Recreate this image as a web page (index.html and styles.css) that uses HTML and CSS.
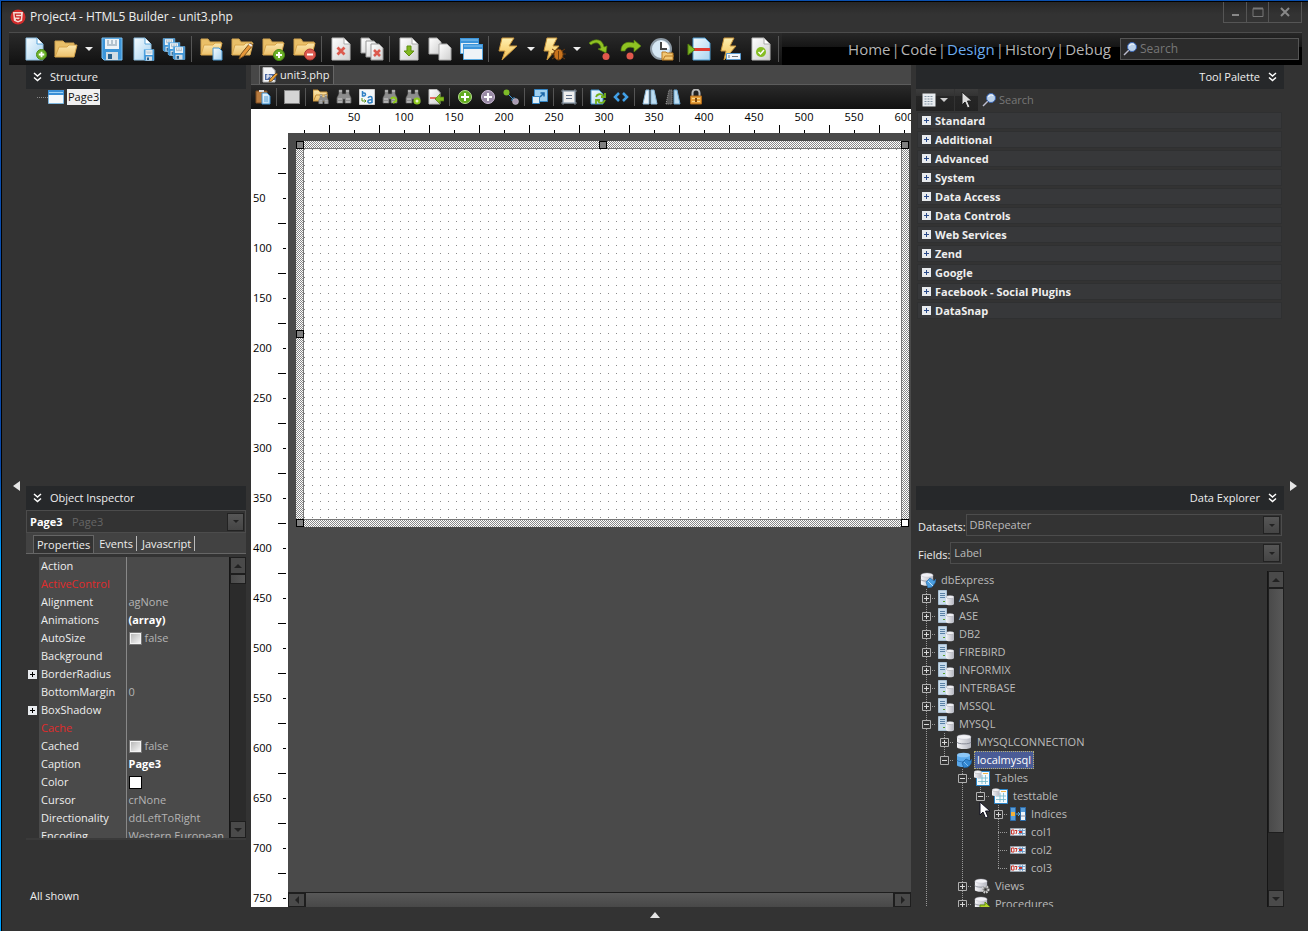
FILE: index.html
```html
<!DOCTYPE html>
<html lang="en">
<head>
    <meta charset="UTF-8">
    <meta name="viewport" content="width=device-width, initial-scale=1.0">
    <title>Project4 - HTML5 Builder - unit3.php</title>
    <link rel="stylesheet" href="styles.css">
</head>
<body>
    <!-- icon sprite -->
    <svg class="sprite" aria-hidden="true">
        <defs>
            <linearGradient id="g-folder" x1="0" y1="0" x2="0" y2="1"><stop offset="0" stop-color="#fbe7ae"/><stop offset="1" stop-color="#ecc06a"/></linearGradient>
            <linearGradient id="g-blue" x1="0" y1="0" x2="1" y2="1"><stop offset="0" stop-color="#f4fbff"/><stop offset="1" stop-color="#a9d3f0"/></linearGradient>
            <linearGradient id="g-grey" x1="0" y1="0" x2="1" y2="1"><stop offset="0" stop-color="#ffffff"/><stop offset="1" stop-color="#cfcfcf"/></linearGradient>
            <linearGradient id="g-bolt" x1="0" y1="0" x2="0" y2="1"><stop offset="0" stop-color="#fff0b0"/><stop offset="1" stop-color="#f3bf50"/></linearGradient>
            <linearGradient id="g-db" x1="0" y1="0" x2="1" y2="0"><stop offset="0" stop-color="#f5f5f8"/><stop offset="1" stop-color="#b4b6c0"/></linearGradient>
        </defs>
        <symbol id="page-blue" viewBox="0 0 24 24"><path d="M3 1h11l6 6v16H3z" fill="url(#g-blue)" stroke="#8fbfe0"/><path d="M14 1v6h6" fill="#fff" stroke="#5ba5d8"/></symbol>
        <symbol id="page-grey" viewBox="0 0 24 24"><path d="M3 1h12l6 6v16H3z" fill="url(#g-grey)" stroke="#bbb"/><path d="M15 1v6h6z" fill="#fff" stroke="#aaa"/></symbol>
        <symbol id="folder" viewBox="0 0 24 24"><path d="M2 18V2h7l2 3h11v4" fill="#e9bf68" stroke="#d0a350"/><path d="M2 18l3-10h9l2-2h7l-3 12z" fill="url(#g-folder)" stroke="#d8a64c"/></symbol>
        <symbol id="plus-badge" viewBox="0 0 12 12"><circle cx="6" cy="6" r="5.500" fill="#6cb02a" stroke="#4b8a12"/><path d="M6 3v6M3 6h6" stroke="#fff" stroke-width="2"/></symbol>
        <symbol id="floppy" viewBox="0 0 24 24"><path d="M2 1h20v22H4l-2-2z" fill="#3d95d8" stroke="#7cc0f0"/><path d="M5 2h14v10H5z" fill="#eef4f8"/><path d="M7 4h2M11 4h2M15 4h2M7 6h2M11 6h2M15 6h2M7 8h10" stroke="#7b93a6"/><path d="M6 15h12v8H6z" fill="#d4dde4"/><path d="M8 17h4v5H8z" fill="#28618f"/></symbol>

        <symbol id="i-logo" viewBox="0 0 16 16"><circle cx="8" cy="8" r="7.500" fill="#d22c2c"/><path d="M3 3h10l-.9 8.800L8 13.500l-4.100-1.700z" fill="#f6ddd6"/><path d="M11 5.200H5.300l.3 2.600h4.800l-.4 2.600-2 .8-2-.8" fill="none" stroke="#c22" stroke-width="1.300"/></symbol>
        <symbol id="i-new" viewBox="0 0 24 24"><use href="#page-blue" x="0" y="0" width="24" height="24"/><use href="#plus-badge" x="13" y="12" width="11" height="11"/></symbol>
        <symbol id="i-open" viewBox="0 0 24 24"><path d="M1 20V4h8l2 2h9v3" fill="#e9bf68" stroke="#d0a350"/><path d="M1 20l4-10h8l2-2h8l-3 12z" fill="url(#g-folder)" stroke="#d8a64c"/></symbol>
        <symbol id="i-saveas" viewBox="0 0 24 24"><use href="#page-blue" width="24" height="24"/><use href="#floppy" x="12" y="12" width="12" height="12"/></symbol>
        <symbol id="i-saveall" viewBox="0 0 24 24"><use href="#floppy" x="0" y="1" width="14" height="14"/><use href="#floppy" x="5" y="5" width="14" height="14"/><use href="#floppy" x="10" y="9" width="14" height="14"/></symbol>
        <symbol id="i-fpage" viewBox="0 0 24 24"><use href="#folder" width="24" height="24"/><path d="M14 11h6l3 3v9h-9z" fill="url(#g-blue)" stroke="#4a95cc"/></symbol>
        <symbol id="i-fedit" viewBox="0 0 24 24"><use href="#folder" width="24" height="24"/><path d="M9 22l2-5L20 6l3 2-9 11z" fill="#e8983a" stroke="#7a5320"/><path d="M19 7l3 2" stroke="#eee" stroke-width="2"/></symbol>
        <symbol id="i-fadd" viewBox="0 0 24 24"><use href="#folder" width="24" height="24"/><use href="#plus-badge" x="12" y="12" width="12" height="12"/></symbol>
        <symbol id="i-fdel" viewBox="0 0 24 24"><use href="#folder" width="24" height="24"/><circle cx="18" cy="17.500" r="5.500" fill="#dc5a50" stroke="#b03a32"/><path d="M15 17.500h6" stroke="#fff" stroke-width="2"/></symbol>
        <symbol id="i-close" viewBox="0 0 24 24"><use href="#page-grey" width="24" height="24"/><path d="M8.500 10.500l7 7M15.500 10.500l-7 7" stroke="#dc5a4e" stroke-width="2.800"/></symbol>
        <symbol id="i-closeall" viewBox="0 0 24 24"><path d="M1 1h8l3 3v12H1z" fill="url(#g-grey)" stroke="#999"/><path d="M6 4h8l4 4v12H6z" fill="url(#g-grey)" stroke="#999"/><path d="M11 7h8l4 4v12H11z" fill="url(#g-grey)" stroke="#999"/><path d="M14 13l6 6M20 13l-6 6" stroke="#dc5a4e" stroke-width="2.500"/></symbol>
        <symbol id="i-down" viewBox="0 0 24 24"><use href="#page-grey" width="24" height="24"/><path d="M10 9h4v5h3l-5 5-5-5h3z" fill="#82b81f" stroke="#5f8f10"/></symbol>
        <symbol id="i-copy" viewBox="0 0 24 24"><path d="M1 1h8l4 4v12H1z" fill="url(#g-grey)" stroke="#aaa"/><path d="M11 7h8l4 4v12H11z" fill="url(#g-grey)" stroke="#aaa"/></symbol>
        <symbol id="i-windows" viewBox="0 0 24 24"><path d="M1.500 1.500h18v15h-18z" fill="#e4eff6" stroke="#5aa9e0"/><path d="M1 1h19v5H1z" fill="#3b94da"/><path d="M2 3h17" stroke="#8cc8f2"/><path d="M4.500 7.500h19v15h-19z" fill="#eef3f7" stroke="#5aa9e0"/><path d="M4 7h20v5H4z" fill="#3b94da"/><path d="M5 9h18" stroke="#8cc8f2"/></symbol>
        <symbol id="i-bolt" viewBox="0 0 24 24"><path d="M6 1h12l-5 8h8L6 23l3-9H3z" fill="url(#g-bolt)" stroke="#c8953c"/></symbol>
        <symbol id="i-bug" viewBox="0 0 24 24"><path d="M5 1h10l-4 8h6L5 23l2-9H2z" fill="url(#g-bolt)" stroke="#c8953c"/><path d="M10 12l3 2M23 12l-3 2M9 17h4M24 17h-4M10 22l3-2M23 22l-3-2" stroke="#6b3a10"/><ellipse cx="16.500" cy="17.500" rx="4.500" ry="5.500" fill="#c8731d" stroke="#73400f"/><path d="M16.500 14v9" stroke="#73400f"/></symbol>
        <symbol id="i-stepinto" viewBox="0 0 24 24"><path d="M1 6c7-6 14-3 15 4l3-1-1 7-8-4 3-1C12 6 8 4 3 8z" fill="#8fc222" stroke="#55800f" stroke-width=".7"/><circle cx="18" cy="19.500" r="3.500" fill="#e0584c"/></symbol>
        <symbol id="i-stepover" viewBox="0 0 24 24"><path d="M2 14C2 6 8 4 15 6V3l7 6-7 6v-4c-5-2-8 0-9 3z" fill="#8fc222" stroke="#55800f" stroke-width=".7"/><circle cx="11" cy="19" r="3.500" fill="#e0584c"/></symbol>
        <symbol id="i-clock" viewBox="0 0 24 24"><circle cx="11" cy="12" r="10" fill="#d6e8f5" stroke="#8d9aa5" stroke-width="2"/><path d="M11 4a8 8 0 018 8h-8z" fill="#fff"/><path d="M11 5v7h6" fill="none" stroke="#444" stroke-width="2"/><path d="M12 23v-8h4l1 1h6v7z" fill="#f2c774" stroke="#b97a22"/><path d="M13 23l2-4h9" fill="none" stroke="#b97a22"/></symbol>
        <symbol id="i-break" viewBox="0 0 24 24"><path d="M6 1h12l5 5v17H6z" fill="url(#g-blue)" stroke="#4e9bd0"/><path d="M7 12.500h16" stroke="#e03a32" stroke-width="3"/><path d="M1 7l7 5.500L1 18z" fill="#7fbb24" stroke="#55800f"/></symbol>
        <symbol id="i-boltbox" viewBox="0 0 24 24"><path d="M6 1h10l-4 8h6L6 23l2-9H3z" fill="url(#g-bolt)" stroke="#c8953c"/><path d="M8.500 16.500h14v6h-14z" fill="#f3f8fc" stroke="#5b9bd0"/><path d="M11 18v3M14 19.500h6" stroke="#777"/></symbol>
        <symbol id="i-check" viewBox="0 0 24 24"><use href="#page-grey" width="24" height="24"/><circle cx="12" cy="15" r="5" fill="#86bd22"/><path d="M9.500 15l2 2 3.500-4" fill="none" stroke="#fff" stroke-width="1.500"/></symbol>

        <symbol id="s-paste" viewBox="0 0 16 16"><path d="M1 2h11v12H1z" fill="#b97b3e" stroke="#7d4d20"/><path d="M4 1h5v2H4z" fill="#ddd"/><path d="M7 4h5l3 3v8H7z" fill="url(#g-blue)" stroke="#3b8ccb"/><path d="M9 8h4M9 10h4M9 12h4" stroke="#5ba0d4"/></symbol>
        <symbol id="s-select" viewBox="0 0 16 16"><path d="M1 2h14v12H1z" fill="#d4d4d4"/><path d="M.5 1.500h15v13H.5z" fill="none" stroke="#eee" stroke-dasharray="1 1"/></symbol>
        <symbol id="s-binoc" viewBox="0 0 16 16"><path d="M3 1h3v4h4V1h3v4l2 4v5H9v-4H7v4H1V9l2-4z" fill="#8d8d8d" stroke="#777" stroke-width=".6"/><path d="M3 2h3M10 2h3M2 10h4M10 10h4M2 13h4M10 13h4" stroke="#d2d2d2"/></symbol>
        <symbol id="s-ffind" viewBox="0 0 16 16"><path d="M0 12V1h5l2 2h7v9z" fill="url(#g-folder)" stroke="#c5903b"/><path d="M1 11l2-5h12" fill="none" stroke="#c5903b"/><use href="#s-binoc" x="5" y="5" width="11" height="11"/></symbol>
        <symbol id="s-replace" viewBox="0 0 16 16"><path d="M.5.5h15v15H.5z" fill="#f3f7fa" stroke="#ccc"/><path d="M3.500 2v5h1.500a1.500 1.500 0 000-3H3.500M9 9c1-2 4-2 4 0v5M13 11c-5-1-5 3-2.500 3 1.500 0 2.500-1 2.500-1.500" fill="none" stroke="#2d7fc4" stroke-width="1.500"/><path d="M3 9v3h4M5.500 10.500L7 12l-1.500 1.500" fill="none" stroke="#5a9318"/></symbol>
        <symbol id="s-findnext" viewBox="0 0 16 16"><use href="#s-binoc" width="16" height="16"/><path d="M9 10c2-3 6-1 5 2l-3 2" fill="none" stroke="#8cc81c" stroke-width="2"/></symbol>
        <symbol id="s-findadd" viewBox="0 0 16 16"><use href="#s-binoc" width="16" height="16"/><circle cx="12" cy="12" r="3.500" fill="#8cc81c"/><circle cx="12" cy="12" r="1.500" fill="#e9f6c8"/></symbol>
        <symbol id="s-goto" viewBox="0 0 16 16"><path d="M1 .5h8l3 3V15H1z" fill="url(#g-grey)" stroke="#bbb"/><path d="M2 9h6" stroke="#e04438" stroke-width="1.500"/><path d="M16 8v4h-4v3l-5-5 5-5v3z" fill="#84bd1e" stroke="#4d790e" stroke-width=".7"/></symbol>
        <symbol id="s-add" viewBox="0 0 16 16"><circle cx="8" cy="8" r="6.500" fill="#62ac1e" stroke="#b5de90"/><path d="M8 4v8M4 8h8" stroke="#fff" stroke-width="2"/></symbol>
        <symbol id="s-add2" viewBox="0 0 16 16"><circle cx="8" cy="8" r="6.500" fill="#9a8ba6" stroke="#cdbcd8"/><path d="M8 4v8M4 8h8" stroke="#fff" stroke-width="2"/></symbol>
        <symbol id="s-link" viewBox="0 0 16 16"><path d="M5 5l6 6M11 8v3H8" stroke="#3b91d2" fill="none"/><circle cx="3.500" cy="3.500" r="3" fill="#7dbb28"/><circle cx="12.500" cy="12.500" r="3" fill="#a99ab3" stroke="#ccc" stroke-width=".5"/></symbol>
        <symbol id="s-scale" viewBox="0 0 16 16"><path d="M2.500.5h13v12h-13z" fill="#9fd0f0" stroke="#3585c4"/><path d="M.5 7.500h7v7h-7z" fill="#dceef9" stroke="#3585c4"/><path d="M8 8l4-4M8.500 4H12v3.500" stroke="#1c67a8" fill="none" stroke-width="1.500"/></symbol>
        <symbol id="s-frame" viewBox="0 0 16 16"><path d="M2 2h12v12H2z" fill="#eee" stroke="#8898a8"/><path d="M0 2h16M0 14h16M2 0v16M14 0v16" stroke="#9aa6b4" stroke-width=".7"/><path d="M5 6.500h6M5 9.500h6" stroke="#60718a"/></symbol>
        <symbol id="s-refresh" viewBox="0 0 16 16"><path d="M1 1h8l4 4v10H1z" fill="url(#g-blue)" stroke="#4594cc"/><path d="M6 8c1-3 5-4 7-1M15 4v4h-4M15 11c-1 3-5 4-7 1M6 15v-4h4" fill="none" stroke="#74b21a" stroke-width="1.800"/></symbol>
        <symbol id="s-code" viewBox="0 0 16 16"><path d="M6 4L2 8l4 4M10 4l4 4-4 4" fill="none" stroke="#42a0e6" stroke-width="2.500"/></symbol>
        <symbol id="s-mirror" viewBox="0 0 16 16"><path d="M1 15L4 1h3v14z" fill="#e9f4fb" stroke="#8bb8d8"/><path d="M15 15L12 1H9v14z" fill="#bcdcf0" stroke="#8bb8d8"/></symbol>
        <symbol id="s-mirror2" viewBox="0 0 16 16"><path d="M1 15L4 1h3v14z" fill="#555" stroke="#999" stroke-dasharray="1 1"/><path d="M15 15L12 1H9v14z" fill="#bcdcf0" stroke="#6aa6d0"/></symbol>
        <symbol id="s-lock" viewBox="0 0 16 16"><path d="M4.500 7V4a3.500 3.500 0 017 0v3" fill="none" stroke="#b9b9b9" stroke-width="2"/><path d="M2.500 7h11v8h-11z" fill="#e9a13a" stroke="#a9651a"/><path d="M4 9.500h8M4 12.500h8" stroke="#fbd48a"/><path d="M7 9h2v4H7z" fill="#7a4611"/></symbol>
        <symbol id="s-php" viewBox="0 0 16 16"><path d="M1 .5h9l3 3V15H1z" fill="#f2f4f6" stroke="#bbb"/><path d="M3 7h11v6H3z" fill="#4a68a4"/><path d="M5 12V8h2v2H5M9 8v4M9 10h2" stroke="#fff" fill="none"/><path d="M7 15l1-3 6-6 2 1-6 7z" fill="#e9a13a" stroke="#5a3c12" stroke-width=".7"/></symbol>
        <symbol id="s-window" viewBox="0 0 16 14"><path d="M.5.5h15v13H.5z" fill="#f6f9fb" stroke="#7fb8e0"/><path d="M0 0h16v5H0z" fill="#3a8fd6"/><path d="M1 2.500h14" stroke="#9fd2f5"/></symbol>
        <symbol id="s-search" viewBox="0 0 16 16"><path d="M1 14l5-5" stroke="#bbc" stroke-width="1.500"/><circle cx="9" cy="6" r="4.500" fill="#bcd2ea" stroke="#3b66b4"/><path d="M6.500 5a3 3 0 014.500-1.500" stroke="#fff" fill="none"/></symbol>
        <symbol id="s-list" viewBox="0 0 14 14"><path d="M.5.5h13v13H.5z" fill="#e8ecef"/><path d="M2.500 3.500h9M2.500 6h9M2.500 8.500h9M2.500 11h9" stroke="#8596a5" stroke-dasharray="2 1"/></symbol>
        <symbol id="s-pointer" viewBox="0 0 12 18"><path d="M1 1v13l3-3 2.500 6 2.500-1-2.500-6H11z" fill="currentColor" stroke="var(--edge, #222)"/></symbol>

        <symbol id="t-db" viewBox="0 0 16 16"><path d="M1 3v10c0 2.700 14 2.700 14 0V3z" fill="url(#g-db)"/><ellipse cx="8" cy="3" rx="7" ry="2.300" fill="#f2f2f6" stroke="#b9bbc5" stroke-width=".5"/><path d="M1 8c0 2.500 14 2.500 14 0" fill="none" stroke="#878a96"/></symbol>
        <symbol id="t-dblink" viewBox="0 0 16 16"><use href="#t-db" width="14" height="15"/><path d="M6 10l4-4 4 3 2-2-1 4-3 4-4 1z" fill="#4c9fe0" stroke="#2a6faf" stroke-width=".7"/><path d="M8 9l5 5" stroke="#bfe0f8"/></symbol>
        <symbol id="t-dbblue" viewBox="0 0 16 16"><path d="M1 3v10c0 2.700 13 2.700 13 0V3z" fill="#5aa9ec"/><ellipse cx="7.500" cy="3" rx="6.500" ry="2.300" fill="#8cc6f6"/><path d="M1 8c0 2.500 13 2.500 13 0" fill="none" stroke="#2e78bd"/><path d="M6 11l4-4 4 2 2-2-1 5-3 3-4 1z" fill="#3388d2" stroke="#1d5c98" stroke-width=".7"/><path d="M8 10l4 4" stroke="#7fbcf0"/></symbol>
        <symbol id="t-server" viewBox="0 0 16 16"><path d="M.5.5h8v14h-8z" fill="#c9dcec" stroke="#a9c0d3"/><path d="M2 3.500h5M2 5.500h5M2 7.500h5" stroke="#5b83a6"/><path d="M5 11h2v1H5z" fill="#5ba32a"/><path d="M8 7v7c0 1.800 8 1.800 8 0V7z" fill="url(#g-db)"/><ellipse cx="12" cy="7" rx="4" ry="1.500" fill="#f5f5f8" stroke="#9a9ca6" stroke-width=".5"/></symbol>
        <symbol id="t-table" viewBox="0 0 16 16"><path d="M2.500 1.500h13v14h-13z" fill="#f4fafd" stroke="#2b86c9"/><path d="M9 3h5v1H9z" fill="#f3b64c"/><path d="M4 8h10M4 11.500h10M8 5v9M11.500 5v9" stroke="#6fb6c9" stroke-width=".8"/><path d="M0 2v5c0 1.500 7.500 1.500 7.500 0V2z" fill="url(#g-db)"/><ellipse cx="3.800" cy="2" rx="3.700" ry="1.500" fill="#f2f2f6" stroke="#aaa" stroke-width=".5"/></symbol>
        <symbol id="t-index" viewBox="0 0 16 16"><path d="M.5 1.500h5v13h-5z" fill="#5a9dd8" stroke="#2b6cab"/><path d="M1 6h4v4H1z" fill="#f4b23c"/><path d="M10.500 1.500h5v13h-5z" fill="#f0f4f8" stroke="#2b6cab"/><path d="M11 2h4v4h-4z" fill="#5a9dd8"/><path d="M11 10h5" stroke="#889"/><path d="M6 8h4M8 6l2 2-2 2" fill="none" stroke="#52aef0"/></symbol>
        <symbol id="t-col" viewBox="0 0 16 10"><path d="M.5 1.500h15v7H.5z" fill="#eef2f6" stroke="#98a2ac"/><path d="M1.500 3v4H4V3zM5 3.500h2L6 7" fill="none" stroke="#c8352b"/><path d="M8 3.500h7M8 6.500h7M10 2v6M12.500 2v6" stroke="#5b93c8" stroke-width=".8"/><path d="M9 4h3v2H9z" fill="#c8352b"/></symbol>
        <symbol id="t-views" viewBox="0 0 16 16"><use href="#t-db" width="14" height="15"/><circle cx="11.500" cy="11.500" r="3" fill="#777" stroke="#d0d0d0" stroke-width="2" stroke-dasharray="1.500 1"/><circle cx="11.500" cy="11.500" r="1" fill="#333"/></symbol>
        <symbol id="t-procs" viewBox="0 0 16 16"><use href="#t-db" width="14" height="15"/><path d="M6 9h5V6l5 5-5 4v-3H6z" fill="#b6d62a" stroke="#5f8f10"/></symbol>
        <symbol id="x-plus" viewBox="0 0 9 9"><path d="M.5.5h8v8h-8z" fill="#333" stroke="#b0b0b0"/><path d="M2 4.500h5M4.500 2v5" stroke="#d8d8d8"/></symbol>
        <symbol id="x-minus" viewBox="0 0 9 9"><path d="M.5.5h8v8h-8z" fill="#333" stroke="#b0b0b0"/><path d="M2 4.500h5" stroke="#d8d8d8"/></symbol>
        <symbol id="x-box" viewBox="0 0 9 9"><path d="M0 0h9v9H0z" fill="#e8ebee"/><path d="M2 4.500h5M4.500 2v5" stroke="currentColor"/></symbol>
        <symbol id="x-chevron" viewBox="0 0 9 10"><path d="M1 1l3.500 3L8 1M1 5.500l3.500 3 3.500-3" fill="none" stroke="#fff" stroke-width="1.500"/></symbol>
    </svg>

    <div class="app">
        <header class="titlebar">
            <svg class="icon-16"><use href="#i-logo"/></svg>
            <h1>Project4 - HTML5 Builder - unit3.php</h1>
            <div class="window-buttons">
                <button aria-label="Minimize"><svg class="icon-12" viewBox="0 0 12 12"><path d="M3 9h7" stroke="#888" stroke-width="2"/></svg></button>
                <button aria-label="Maximize"><svg class="icon-12" viewBox="0 0 12 12"><path d="M1 2.500h10v8H1z" fill="none" stroke="#777"/><path d="M1 2.500h10" stroke="#777" stroke-width="2"/></svg></button>
                <button class="wide" aria-label="Close"><svg class="icon-12" viewBox="0 0 12 12"><path d="M2 2l8 8M10 2l-8 8" stroke="#888" stroke-width="2"/></svg></button>
            </div>
        </header>

        <div class="toolbar main-toolbar">
            <button aria-label="New"><svg><use href="#i-new"/></svg></button>
            <button aria-label="Open"><svg><use href="#i-open"/></svg></button>
            <button class="caret" aria-label="Recent files"></button>
            <button aria-label="Save"><svg><use href="#floppy"/></svg></button>
            <button aria-label="Save as"><svg><use href="#i-saveas"/></svg></button>
            <button aria-label="Save all"><svg><use href="#i-saveall"/></svg></button>
            <i class="sep"></i>
            <button aria-label="Open project"><svg><use href="#i-fpage"/></svg></button>
            <button aria-label="Edit project"><svg><use href="#i-fedit"/></svg></button>
            <button aria-label="Add to project"><svg><use href="#i-fadd"/></svg></button>
            <button aria-label="Remove from project"><svg><use href="#i-fdel"/></svg></button>
            <i class="sep"></i>
            <button aria-label="Close file"><svg><use href="#i-close"/></svg></button>
            <button aria-label="Close all"><svg><use href="#i-closeall"/></svg></button>
            <i class="sep"></i>
            <button aria-label="Load unit"><svg><use href="#i-down"/></svg></button>
            <button aria-label="Copy"><svg><use href="#i-copy"/></svg></button>
            <button aria-label="Windows"><svg><use href="#i-windows"/></svg></button>
            <i class="sep"></i>
            <button aria-label="Run"><svg><use href="#i-bolt"/></svg></button>
            <button class="caret" aria-label="Run options"></button>
            <button aria-label="Debug"><svg><use href="#i-bug"/></svg></button>
            <button class="caret" aria-label="Debug options"></button>
            <button aria-label="Step into"><svg><use href="#i-stepinto"/></svg></button>
            <button aria-label="Step over"><svg><use href="#i-stepover"/></svg></button>
            <button aria-label="Profiler"><svg><use href="#i-clock"/></svg></button>
            <i class="sep"></i>
            <button aria-label="Breakpoint"><svg><use href="#i-break"/></svg></button>
            <button aria-label="Deploy"><svg><use href="#i-boltbox"/></svg></button>
            <button aria-label="Check syntax"><svg><use href="#i-check"/></svg></button>
            <i class="sep"></i>
            <div class="toolbar-end">
                <nav class="modes">
                    <a href="#">Home</a> | <a href="#">Code</a> | <a href="#" class="active">Design</a> | <a href="#">History</a> | <a href="#">Debug</a>
                </nav>
                <label class="search main-search">
                    <svg class="icon-16"><use href="#s-search"/></svg>
                    <input type="text" placeholder="Search" aria-label="Search">
                </label>
            </div>
        </div>

        <main class="workspace">
            <div class="gutter gutter-left"><button class="collapse" aria-label="Hide left panel"><svg width="7" height="10" viewBox="0 0 7 10"><path d="M7 0v10L0 5z" fill="#e6e6e6"/></svg></button></div>

            <aside class="side left">
                <section class="panel">
                    <h2 class="panel-head"><svg class="chevron"><use href="#x-chevron"/></svg>Structure</h2>
                    <div class="structure-item">
                        <i class="dots"></i>
                        <svg width="16" height="14"><use href="#s-window"/></svg>
                        <span>Page3</span>
                    </div>
                </section>

                <section class="panel">
                    <h2 class="panel-head"><svg class="chevron"><use href="#x-chevron"/></svg>Object Inspector</h2>
                    <div class="combo object-combo">
                        <select aria-label="Object"><option>Page3</option></select>
                        <span class="combo-hint">Page3</span>
                        <i class="combo-arrow"></i>
                    </div>
                    <div class="tabs">
                        <button class="active">Properties</button>
                        <button>Events</button>
                        <button>Javascript</button>
                    </div>
                    <div class="inspector">
                        <div class="props-wrap">
                            <table class="props">
                                <tr><td></td><th>Action</th><td></td></tr>
                                <tr><td></td><th class="red">ActiveControl</th><td></td></tr>
                                <tr><td></td><th>Alignment</th><td>agNone</td></tr>
                                <tr><td></td><th>Animations</th><td class="set">(array)</td></tr>
                                <tr><td></td><th>AutoSize</th><td><label><input type="checkbox">false</label></td></tr>
                                <tr><td></td><th>Background</th><td></td></tr>
                                <tr><td><svg class="twist"><use href="#x-box"/></svg></td><th>BorderRadius</th><td></td></tr>
                                <tr><td></td><th>BottomMargin</th><td>0</td></tr>
                                <tr><td><svg class="twist"><use href="#x-box"/></svg></td><th>BoxShadow</th><td></td></tr>
                                <tr><td></td><th class="red">Cache</th><td></td></tr>
                                <tr><td></td><th>Cached</th><td><label><input type="checkbox">false</label></td></tr>
                                <tr><td></td><th>Caption</th><td class="set">Page3</td></tr>
                                <tr><td></td><th>Color</th><td><i class="swatch"></i></td></tr>
                                <tr><td></td><th>Cursor</th><td>crNone</td></tr>
                                <tr><td></td><th>Directionality</th><td>ddLeftToRight</td></tr>
                                <tr><td></td><th>Encoding</th><td>Western European</td></tr>
                            </table>
                        </div>
                        <div class="vscroll">
                            <button class="up" aria-label="Scroll up"></button>
                            <div class="track"><i class="thumb thumb-small"></i></div>
                            <button class="down" aria-label="Scroll down"></button>
                        </div>
                    </div>
                    <p class="status">All shown</p>
                </section>
            </aside>

            <section class="editor">
                <div class="file-tabs"><button><svg class="icon-16"><use href="#s-php"/></svg>unit3.php</button></div>
                <div class="toolbar small">
                    <button aria-label="Paste"><svg><use href="#s-paste"/></svg></button>
                    <i class="sep"></i>
                    <button aria-label="Select all"><svg><use href="#s-select"/></svg></button>
                    <i class="sep"></i>
                    <button aria-label="Find in files"><svg><use href="#s-ffind"/></svg></button>
                    <button aria-label="Find"><svg><use href="#s-binoc"/></svg></button>
                    <button aria-label="Replace"><svg><use href="#s-replace"/></svg></button>
                    <button aria-label="Find next"><svg><use href="#s-findnext"/></svg></button>
                    <button aria-label="Incremental search"><svg><use href="#s-findadd"/></svg></button>
                    <button aria-label="Go to line"><svg><use href="#s-goto"/></svg></button>
                    <i class="sep"></i>
                    <button aria-label="Add"><svg><use href="#s-add"/></svg></button>
                    <button aria-label="Add child"><svg><use href="#s-add2"/></svg></button>
                    <button aria-label="Link"><svg><use href="#s-link"/></svg></button>
                    <i class="sep"></i>
                    <button aria-label="Scale"><svg><use href="#s-scale"/></svg></button>
                    <i class="sep"></i>
                    <button aria-label="Frame"><svg><use href="#s-frame"/></svg></button>
                    <i class="sep"></i>
                    <button aria-label="Refresh"><svg><use href="#s-refresh"/></svg></button>
                    <button aria-label="View code"><svg><use href="#s-code"/></svg></button>
                    <i class="sep"></i>
                    <button aria-label="Bring to front"><svg><use href="#s-mirror"/></svg></button>
                    <button aria-label="Send to back"><svg><use href="#s-mirror2"/></svg></button>
                    <button aria-label="Lock controls"><svg><use href="#s-lock"/></svg></button>
                </div>
                <div class="ruler-top">
                    <span>50</span><span>100</span><span>150</span><span>200</span><span>250</span><span>300</span><span>350</span><span>400</span><span>450</span><span>500</span><span>550</span><span>600</span>
                </div>
                <div class="design">
                    <div class="ruler-left">
                        <span>50</span><span>100</span><span>150</span><span>200</span><span>250</span><span>300</span><span>350</span><span>400</span><span>450</span><span>500</span><span>550</span><span>600</span><span>650</span><span>700</span><span>750</span>
                    </div>
                    <div class="canvas">
                        <div class="stage">
                            <div class="frame">
                                <div class="sheet"></div>
                                <i class="handle nw"></i><i class="handle n"></i><i class="handle ne"></i>
                                <i class="handle w"></i><i class="handle sw"></i><i class="handle se"></i>
                            </div>
                        </div>
                        <div class="hscroll">
                            <button class="prev" aria-label="Scroll left"></button>
                            <i class="thumb"></i>
                            <button class="next" aria-label="Scroll right"></button>
                        </div>
                    </div>
                </div>
            </section>

            <aside class="side right">
                <section class="panel">
                    <h2 class="panel-head">Tool Palette<svg class="chevron"><use href="#x-chevron"/></svg></h2>
                    <div class="palette-bar">
                        <button class="view-menu" aria-label="Categories"><svg width="14" height="14"><use href="#s-list"/></svg><i></i></button>
                        <button class="pointer" aria-label="Pointer"><svg width="12" height="18"><use href="#s-pointer"/></svg></button>
                        <label class="search">
                            <svg class="icon-16"><use href="#s-search"/></svg>
                            <input type="text" placeholder="Search" aria-label="Search components">
                        </label>
                    </div>
                    <ul class="palette">
                        <li><svg class="twist"><use href="#x-box"/></svg>Standard</li>
                        <li><svg class="twist"><use href="#x-box"/></svg>Additional</li>
                        <li><svg class="twist"><use href="#x-box"/></svg>Advanced</li>
                        <li><svg class="twist"><use href="#x-box"/></svg>System</li>
                        <li><svg class="twist"><use href="#x-box"/></svg>Data Access</li>
                        <li><svg class="twist"><use href="#x-box"/></svg>Data Controls</li>
                        <li><svg class="twist"><use href="#x-box"/></svg>Web Services</li>
                        <li><svg class="twist"><use href="#x-box"/></svg>Zend</li>
                        <li><svg class="twist"><use href="#x-box"/></svg>Google</li>
                        <li><svg class="twist"><use href="#x-box"/></svg>Facebook - Social Plugins</li>
                        <li><svg class="twist"><use href="#x-box"/></svg>DataSnap</li>
                    </ul>
                </section>

                <section class="panel">
                    <h2 class="panel-head">Data Explorer<svg class="chevron"><use href="#x-chevron"/></svg></h2>
                    <div class="fields">
                        <div class="field">
                            <label for="datasets">Datasets:</label>
                            <div class="combo"><select id="datasets"><option>DBRepeater</option></select><i class="combo-arrow"></i></div>
                        </div>
                        <div class="field">
                            <label for="fields">Fields:</label>
                            <div class="combo"><select id="fields"><option>Label</option></select><i class="combo-arrow"></i></div>
                        </div>
                    </div>
                    <div class="explorer">
                        <div class="tree">
                            <div class="root"><svg class="icon-16"><use href="#t-dblink"/></svg><span>dbExpress</span></div>
                            <ul>
                                <li><div class="node"><svg class="twist"><use href="#x-plus"/></svg><svg class="icon-16"><use href="#t-server"/></svg><span>ASA</span></div></li>
                                <li><div class="node"><svg class="twist"><use href="#x-plus"/></svg><svg class="icon-16"><use href="#t-server"/></svg><span>ASE</span></div></li>
                                <li><div class="node"><svg class="twist"><use href="#x-plus"/></svg><svg class="icon-16"><use href="#t-server"/></svg><span>DB2</span></div></li>
                                <li><div class="node"><svg class="twist"><use href="#x-plus"/></svg><svg class="icon-16"><use href="#t-server"/></svg><span>FIREBIRD</span></div></li>
                                <li><div class="node"><svg class="twist"><use href="#x-plus"/></svg><svg class="icon-16"><use href="#t-server"/></svg><span>INFORMIX</span></div></li>
                                <li><div class="node"><svg class="twist"><use href="#x-plus"/></svg><svg class="icon-16"><use href="#t-server"/></svg><span>INTERBASE</span></div></li>
                                <li><div class="node"><svg class="twist"><use href="#x-plus"/></svg><svg class="icon-16"><use href="#t-server"/></svg><span>MSSQL</span></div></li>
                                <li class="more">
                                    <div class="node"><svg class="twist"><use href="#x-minus"/></svg><svg class="icon-16"><use href="#t-server"/></svg><span>MYSQL</span></div>
                                    <ul>
                                        <li><div class="node"><svg class="twist"><use href="#x-plus"/></svg><svg class="icon-16"><use href="#t-db"/></svg><span>MYSQLCONNECTION</span></div></li>
                                        <li>
                                            <div class="node"><svg class="twist"><use href="#x-minus"/></svg><svg class="icon-16"><use href="#t-dbblue"/></svg><span class="selected">localmysql</span></div>
                                            <ul>
                                                <li>
                                                    <div class="node"><svg class="twist"><use href="#x-minus"/></svg><svg class="icon-16"><use href="#t-table"/></svg><span>Tables</span></div>
                                                    <ul>
                                                        <li>
                                                            <div class="node"><svg class="twist"><use href="#x-minus"/></svg><svg class="icon-16"><use href="#t-table"/></svg><span>testtable</span><svg class="mouse" width="12" height="18"><use href="#s-pointer"/></svg></div>
                                                            <ul>
                                                                <li><div class="node"><svg class="twist"><use href="#x-plus"/></svg><svg class="icon-16"><use href="#t-index"/></svg><span>Indices</span></div></li>
                                                                <li><div class="node leaf"><svg class="icon-16"><use href="#t-col"/></svg><span>col1</span></div></li>
                                                                <li><div class="node leaf"><svg class="icon-16"><use href="#t-col"/></svg><span>col2</span></div></li>
                                                                <li><div class="node leaf"><svg class="icon-16"><use href="#t-col"/></svg><span>col3</span></div></li>
                                                            </ul>
                                                        </li>
                                                    </ul>
                                                </li>
                                                <li><div class="node"><svg class="twist"><use href="#x-plus"/></svg><svg class="icon-16"><use href="#t-views"/></svg><span>Views</span></div></li>
                                                <li class="more"><div class="node"><svg class="twist"><use href="#x-plus"/></svg><svg class="icon-16"><use href="#t-procs"/></svg><span>Procedures</span></div></li>
                                            </ul>
                                        </li>
                                    </ul>
                                </li>
                            </ul>
                        </div>
                        <div class="vscroll">
                            <button class="up" aria-label="Scroll up"></button>
                            <div class="track"><i class="thumb thumb-tree"></i></div>
                            <button class="down" aria-label="Scroll down"></button>
                        </div>
                    </div>
                </section>
            </aside>

            <div class="gutter gutter-right"><button class="collapse" aria-label="Hide right panel"><svg width="7" height="10" viewBox="0 0 7 10"><path d="M0 0v10l7-5z" fill="#e6e6e6"/></svg></button></div>
        </main>

        <footer class="bottom"><button class="collapse" aria-label="Show messages"><svg width="10" height="6" viewBox="0 0 10 6"><path d="M0 6h10L5 0z" fill="#e6e6e6"/></svg></button></footer>
    </div>
</body>
</html>
```
FILE: styles.css
```css
* {
    box-sizing: border-box;
}

body {
    margin: 0;
    height: 100vh;
    padding: 1px 0 0 1px;
    overflow: hidden;
    background: linear-gradient(#0a50b0, #0a48a8 50%, #00a0ff 60%, #00a0ff);
    font-family: "Open Sans", "Noto Sans", sans-serif;
    font-size: 11px;
    line-height: 18px;
    color: #eee;
}

button,
input,
select {
    font: inherit;
    color: inherit;
    margin: 0;
    padding: 0;
    border: 0;
    background: none;
}

ul {
    list-style: none;
    margin: 0;
    padding: 0;
}

svg {
    display: block;
    flex: none;
}

.sprite {
    position: absolute;
    width: 0;
    height: 0;
}

.icon-12 {
    width: 12px;
    height: 12px;
}

.icon-16 {
    width: 16px;
    height: 16px;
}

.app {
    display: flex;
    flex-direction: column;
    height: 100%;
    border: 1px solid #000;
    border-width: 1px 0 0 1px;
    background: #333;
}

/* title bar */
.titlebar {
    flex: none;
    display: flex;
    align-items: center;
    gap: 4px;
    height: 30px;
    padding: 0 6px 0 8px;
    background: linear-gradient(#262626, #333 12px);
}

.titlebar h1 {
    flex: 1;
    margin: 0;
    font-size: 12px;
    font-weight: normal;
}

.window-buttons {
    display: flex;
    align-self: flex-start;
    border: 1px solid #555;
    border-top: 0;
}

.window-buttons button {
    display: flex;
    align-items: center;
    justify-content: center;
    width: 22px;
    height: 20px;
}

.window-buttons button + button {
    border-left: 1px solid #555;
}

.window-buttons .wide {
    width: 33px;
}

/* toolbars */
.toolbar {
    flex: none;
    display: flex;
    align-items: center;
    background: linear-gradient(#2a2a2a, #111);
    border-top: 1px solid #4c4c4c;
}

.main-toolbar {
    height: 33px;
    margin: 0 6px 0 7px;
    padding-left: 10px;
}

.toolbar button {
    display: flex;
    align-items: center;
    justify-content: center;
    width: 31px;
    height: 100%;
}

.toolbar svg {
    width: 24px;
    height: 24px;
}

.toolbar .caret {
    width: 15px;
}

.toolbar .caret::before {
    content: "";
    border: 4px solid transparent;
    border-top-color: #eee;
    border-bottom: 0;
}

.sep {
    width: 1px;
    height: 26px;
    margin: 0 3px 0 2px;
    background: #555;
}

.small {
    height: 25px;
    border-top-color: #5c5c5c;
}

.small button {
    width: 23px;
}

.small svg {
    width: 16px;
    height: 16px;
}

.small .sep {
    height: 18px;
}

.toolbar-end {
    flex: 1;
    display: flex;
    align-items: center;
    justify-content: flex-end;
    height: 100%;
    background: linear-gradient(#272727, #151515 14px, #000 14px);
}

.modes {
    display: flex;
    gap: 1px;
    font-size: 15px;
    color: #aaa;
}

.modes a {
    color: #b4b4b4;
    text-decoration: none;
}

.modes .active {
    color: #6cabee;
}

.search {
    display: flex;
    align-items: center;
    gap: 1px;
}

.search svg {
    width: 16px;
    height: 16px;
}

.search input {
    width: 100%;
    outline: 0;
}

.search input::placeholder {
    color: #777;
    opacity: 1;
}

.main-search {
    flex: none;
    width: 179px;
    height: 22px;
    margin: 0 3px 0 9px;
    padding-left: 2px;
    border: 1px solid #555;
    background: #2b2b2b;
    font-size: 12px;
}

/* main layout */
.workspace {
    flex: 1;
    display: flex;
    min-height: 0;
}

.gutter {
    flex: none;
    display: flex;
    align-items: center;
    width: 24px;
}

.gutter-left {
    justify-content: flex-end;
    padding-right: 6px;
}

.gutter-right {
    padding-left: 6px;
}

.collapse {
    display: block;
}

.bottom {
    flex: none;
    display: flex;
    justify-content: center;
    align-items: flex-start;
    height: 24px;
    padding-top: 5px;
}

.side {
    flex: none;
    display: flex;
    flex-direction: column;
}

.left {
    width: 220px;
    margin-right: 5px;
}

.right {
    width: 368px;
    margin-left: 5px;
}

.panel {
    flex: 1 1 0;
    display: flex;
    flex-direction: column;
    min-height: 0;
}

.panel-head {
    flex: none;
    display: flex;
    align-items: center;
    gap: 8px;
    height: 24px;
    margin: 0;
    padding: 0 7px;
    background: #26282a;
    font-size: 11px;
    font-weight: normal;
}

.right .panel-head {
    justify-content: flex-end;
}

.chevron {
    width: 9px;
    height: 10px;
}

.twist {
    width: 9px;
    height: 9px;
    color: #000;
}

.structure-item {
    display: flex;
    align-items: center;
    height: 16px;
    padding-left: 11px;
}

.dots {
    width: 11px;
    border-top: 1px dotted #888;
}

.structure-item span {
    margin-left: 3px;
    padding: 0 1px;
    line-height: 16px;
    background: #f0f0f0;
    color: #111;
}

/* combo boxes */
.combo {
    display: grid;
    grid-template-columns: 1fr 18px;
    align-items: center;
    height: 22px;
    border: 1px solid #4c4c4c;
}

.combo > * {
    grid-row: 1;
}

.combo select {
    grid-column: 1 / 3;
    width: 100%;
    height: 100%;
    padding-left: 3px;
    appearance: none;
    outline: 0;
    color: #bbb;
}

.combo-arrow {
    grid-column: 2;
    display: flex;
    align-items: center;
    justify-content: center;
    width: 17px;
    height: 18px;
    border: 1px solid #222;
    background: linear-gradient(#565656, #454545);
    pointer-events: none;
}

.combo-arrow::before {
    content: "";
    border: 3px solid transparent;
    border-top-color: #222;
    border-bottom: 0;
}

.object-combo {
    flex: none;
    height: 23px;
}

.object-combo select {
    font-weight: bold;
    color: #fff;
}

.combo-hint {
    grid-column: 1;
    padding-left: 45px;
    color: #666;
    pointer-events: none;
}

/* object inspector */
.tabs {
    flex: none;
    display: flex;
    align-items: flex-end;
    height: 21px;
    margin-bottom: 3px;
    padding-left: 7px;
    border-bottom: 1px solid #666;
    background: #424242;
}

.tabs button {
    height: 18px;
    padding: 0 0 0 5px;
    line-height: 18px;
}

.tabs button::after {
    content: "";
    margin-left: 3px;
    border-right: 1px solid #bbb;
}

.tabs .active {
    padding: 0 3px;
    border: 1px solid #666;
    border-bottom: 0;
    background: #333;
}

.tabs .active::after {
    content: none;
}

.inspector {
    flex: 1;
    display: flex;
    min-height: 0;
}

.props-wrap {
    flex: 1;
    overflow: hidden;
}

.props {
    width: 100%;
    table-layout: fixed;
    border-collapse: collapse;
}

.props tr {
    height: 18px;
    background: #4a4a4a;
}

.props td,
.props th {
    height: 18px;
    padding: 0 0 0 2px;
    text-align: left;
    font-weight: normal;
    white-space: nowrap;
    overflow: hidden;
}

.props td:first-child {
    width: 13px;
    background: #333;
}

.props th {
    width: 87px;
}

.props td:last-child {
    border-left: 1px solid #888;
    color: #b4b4b4;
}

.props .red {
    color: #e02a2a;
}

.props .set:last-child {
    font-weight: bold;
    color: #fff;
}

.props label {
    display: flex;
    align-items: center;
    gap: 3px;
}

.props input {
    width: 13px;
    height: 13px;
    appearance: none;
    border: 2px solid #f4f4f4;
    background: linear-gradient(135deg, #b8b8b8, #f4f4f4);
    outline: 1px solid #777;
    outline-offset: -1px;
}

.swatch {
    display: block;
    width: 13px;
    height: 13px;
    border: 1px solid #000;
    background: #fff;
}

.status {
    flex: none;
    height: 69px;
    margin: 0;
    padding: 47px 0 0 4px;
    border-top: 2px solid #3a3a3a;
}

/* scrollbars */
.vscroll {
    flex: none;
    display: flex;
    flex-direction: column;
    width: 17px;
    background: #2b2b2b;
    border-left: 1px solid #151515;
}

.vscroll button,
.hscroll button {
    flex: none;
    display: flex;
    align-items: center;
    justify-content: center;
    width: 100%;
    height: 17px;
    border: 1px solid #1e1e1e;
    background: #4a4a4a;
}

.vscroll button::before,
.hscroll button::before {
    content: "";
    border: 4px solid transparent;
}

.vscroll .up::before {
    border-bottom-color: #222;
    border-top: 0;
}

.vscroll .down::before {
    border-top-color: #222;
    border-bottom: 0;
}

.track {
    flex: 1;
}

.thumb {
    display: block;
    border: 1px solid #1e1e1e;
    background: linear-gradient(90deg, #4a4a4a, #585858);
}

.thumb-small {
    height: 10px;
}

.thumb-tree {
    height: 81%;
}

.hscroll {
    flex: none;
    display: flex;
    height: 15px;
    border-top: 1px solid #1e1e1e;
}

.hscroll button {
    width: 17px;
    height: 100%;
}

.hscroll .thumb {
    flex: 1;
    border-width: 0 1px;
    background: linear-gradient(#585858, #484848);
}

.hscroll .prev::before {
    border-right-color: #222;
    border-left: 0;
}

.hscroll .next::before {
    border-left-color: #222;
    border-right: 0;
}

/* editor */
.editor {
    flex: 1;
    display: flex;
    flex-direction: column;
    min-width: 0;
    background: #4a4a4a;
}

.file-tabs {
    flex: none;
    display: flex;
    height: 19px;
    padding: 0 8px;
    background: #474747;
}

.file-tabs button {
    display: flex;
    align-items: center;
    gap: 2px;
    padding: 0 3px 0 2px;
    border: 1px solid #666;
    border-bottom: 0;
    background: #333;
}

.ruler-top {
    flex: none;
    display: flex;
    height: 24px;
    padding-left: 78px;
    overflow: hidden;
    color: #000;
    background:
        repeating-linear-gradient(90deg, #000 0 1px, transparent 1px 50px) 78px 100% / 100% 8px no-repeat,
        repeating-linear-gradient(90deg, #000 0 1px, transparent 1px 50px) 53px 100% / 100% 3px no-repeat,
        #fff;
}

.ruler-top span {
    flex: none;
    width: 50px;
    line-height: 16px;
    text-align: center;
}

.design {
    flex: 1;
    display: flex;
    min-height: 0;
}

.ruler-left {
    flex: none;
    width: 37px;
    padding: 40px 0 0 2px;
    overflow: hidden;
    color: #000;
    background:
        repeating-linear-gradient(#000 0 1px, transparent 1px 50px) 27px 40px / 8px 100% no-repeat,
        repeating-linear-gradient(#000 0 1px, transparent 1px 50px) 32px 15px / 3px 100% no-repeat,
        #fff;
}

.ruler-left span {
    display: block;
    height: 50px;
    line-height: 50px;
}

.canvas {
    flex: 1;
    display: flex;
    flex-direction: column;
    min-width: 0;
}

.stage {
    flex: 1;
    min-height: 0;
    padding: 8px 2px 0 8px;
}

.frame {
    position: relative;
    height: 386px;
    padding: 8px;
    background: repeating-conic-gradient(#888 0 25%, #fff 0 50%) 0 0 / 2px 2px;
}

.sheet {
    height: 100%;
    outline: 1px solid #777;
    background: conic-gradient(from 270deg at 1px 1px, #8a8a8a 90deg, #fff 0) 0 0 / 8px 8px;
}

.handle {
    position: absolute;
    width: 8px;
    height: 8px;
    border: 1px solid #000;
    background: #808080;
}

.nw { top: 0; left: 0; }
.n { top: 0; left: calc(50% - 4px); }
.ne { top: 0; right: 0; }
.w { top: calc(50% - 4px); left: 0; }
.sw { bottom: 0; left: 0; }
.se { bottom: 0; right: 0; background: #fff; }

/* tool palette */
.palette-bar {
    flex: none;
    display: flex;
    gap: 1px;
    height: 22px;
}

.palette-bar button {
    display: flex;
    align-items: center;
    justify-content: center;
    height: 22px;
    background: linear-gradient(#3c3c3c, #333 30%, #262626 30%, #222);
    color: #ddd;
}

.view-menu {
    gap: 4px;
    width: 38px;
}

.view-menu i {
    border: 4px solid transparent;
    border-top-color: #ccc;
    border-bottom: 0;
}

.pointer {
    width: 23px;
}

.palette-bar .search {
    margin-left: 3px;
}

.palette {
    padding: 1px 2px 0 1px;
}

.palette li {
    display: flex;
    align-items: center;
    gap: 4px;
    height: 17px;
    margin-bottom: 2px;
    padding-left: 4px;
    border: 1px solid #2f3031;
    background: #37383a;
    font-weight: bold;
}

.palette .twist {
    color: #2a4a8a;
}

/* data explorer */
.fields {
    flex: none;
    padding: 4px 2px 7px 2px;
}

.field {
    display: flex;
    align-items: flex-end;
}

.field + .field {
    margin-top: 6px;
}

.field .combo {
    flex: 1;
}

.explorer {
    flex: 1;
    display: flex;
    min-height: 0;
}

.tree {
    flex: 1;
    padding-left: 4px;
    overflow: hidden;
    color: #bbb;
}

.root,
.node {
    display: flex;
    align-items: center;
    height: 18px;
}

.tree span {
    margin-left: 2px;
    padding: 0 2px;
    border: 1px solid transparent;
    line-height: 16px;
}

.tree ul ul {
    padding-left: 18px;
}

.tree li {
    background: repeating-linear-gradient(#999 0 1px, transparent 1px 2px) 6px 0 / 1px 9px no-repeat;
}

.tree li:not(:last-child),
.tree .more {
    background-size: 1px 100%;
}

.node {
    position: relative;
    background: repeating-linear-gradient(90deg, #999 0 1px, transparent 1px 2px) 6px 9px / 10px 1px no-repeat;
}

.node .twist {
    margin: 0 7px 0 2px;
}

.leaf {
    padding-left: 18px;
}

.tree .selected {
    border: 1px dotted #b8b070;
    background: #4a5c96;
    color: #fff;
}

.mouse {
    --edge: #112;
    position: absolute;
    top: 14px;
    left: 5px;
    color: #fff;
}
```
